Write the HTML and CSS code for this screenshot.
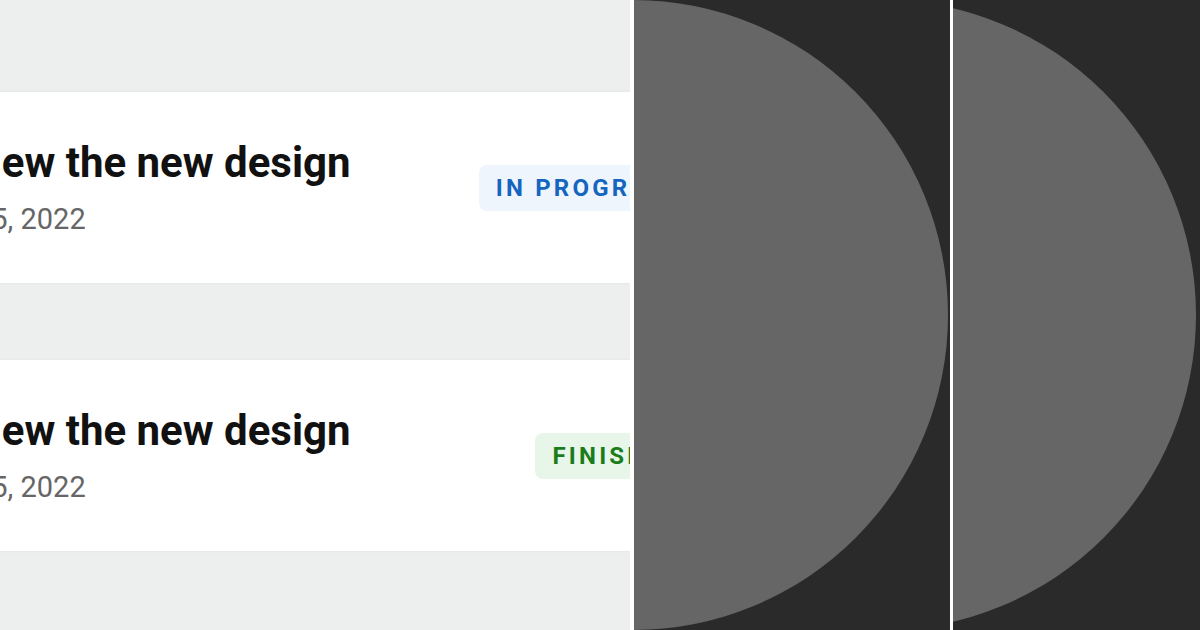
FILE: index.html
```html
<!DOCTYPE html>
<html lang="en">
<head>
<meta charset="utf-8">
<title>Tasks</title>
<link rel="stylesheet" href="styles.css">
</head>
<body>
  <div class="stage">
    <section class="task-pane">
      <ul class="task-list">
        <li class="task-card">
          <div class="task-info">
            <h2 class="task-title">Review the new design</h2>
            <p class="task-date">Jan 15, 2022</p>
          </div>
          <span class="badge badge-progress">IN PROGRESS</span>
        </li>
        <li class="task-card">
          <div class="task-info">
            <h2 class="task-title">Review the new design</h2>
            <p class="task-date">Jan 15, 2022</p>
          </div>
          <span class="badge badge-done">FINISHED</span>
        </li>
      </ul>
    </section>
    <section class="slide slide-first">
      <div class="disc"></div>
    </section>
    <section class="slide slide-second">
      <div class="disc"></div>
    </section>
  </div>
</body>
</html>
```

FILE: styles.css
```css
* {
  box-sizing: border-box;
}

html, body {
  margin: 0;
  padding: 0;
  background: #ffffff;
}

body {
  font-family: Roboto, "Liberation Sans", Arial, sans-serif;
  width: 1200px;
  height: 630px;
  overflow: hidden;
}

.stage {
  display: flex;
  gap: 4px;
  height: 630px;
}

/* task list pane */
.task-pane {
  flex: 0 0 630px;
  height: 630px;
  background: #edefee;
  overflow: hidden;
}

.task-list {
  list-style: none;
  margin: 0 0 0 -104px;
  padding: 92px 0 0 0;
  width: 828px;
  display: flex;
  flex-direction: column;
  gap: 77px;
}

.task-card {
  height: 191px;
  background: #ffffff;
  box-shadow: 0 0 3px rgba(0, 0, 0, 0.06);
  display: flex;
  align-items: center;
  justify-content: space-between;
  padding: 0 24px;
}

.task-info {
  display: flex;
  flex-direction: column;
}

.task-title {
  margin: 0;
  font-size: 42px;
  line-height: 50px;
  font-weight: 700;
  color: #111111;
}

.task-date {
  margin: 13px 0 0 0;
  font-size: 29px;
  line-height: 36px;
  font-weight: 400;
  color: #666666;
}

.badge {
  display: inline-block;
  font-size: 24px;
  line-height: 28px;
  font-weight: 700;
  letter-spacing: 3.2px;
  padding: 9px 17px;
  border-radius: 8px;
}

.badge-progress {
  background: #eef5fd;
  color: #1565c0;
}

.badge-done {
  background: #e8f5e9;
  color: #1b7c1b;
}

/* slides with the grey disc */
.slide {
  position: relative;
  height: 630px;
  background: #2a2a2a;
  overflow: hidden;
}

.slide-first {
  flex: 0 0 316px;
}

.slide-second {
  flex: 1 1 auto;
  margin-left: -1px;
}

.disc {
  position: absolute;
  top: 0;
  width: 630px;
  height: 630px;
  border-radius: 50%;
  background: #666666;
}

.slide-first .disc {
  left: -316px;
}

.slide-second .disc {
  left: -387px;
}
```
